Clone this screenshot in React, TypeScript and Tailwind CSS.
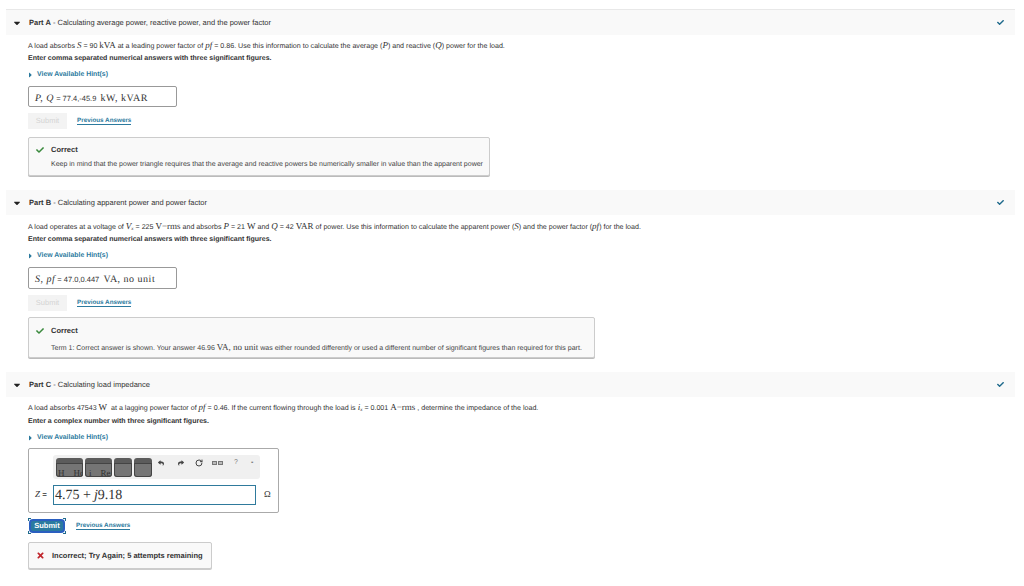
import React from 'react';
import { RotateCw } from 'lucide-react';
import { FaCaretDown, FaCaretRight, FaCheck, FaReply, FaShare, FaTimes } from 'react-icons/fa';

const M = ({ children, i = false }: { children: React.ReactNode; i?: boolean }) => (
  <span className={`font-['Liberation_Serif',serif] text-[9px] ${i ? 'italic' : ''}`}>{children}</span>
);

const A = ({ children, i = false }: { children: React.ReactNode; i?: boolean }) => (
  <span className={`font-['Liberation_Serif',serif] text-[10px] tracking-[0.5px] ${i ? 'italic' : ''}`}>{children}</span>
);

function PartHeader({ label, title }: { label: string; title: string }) {
  return (
    <div className="flex h-[25px] items-center bg-[#f9f9f9] pl-[6px] pr-[11px]">
      <FaCaretDown className="mt-[1px] h-[10px] w-[10px] text-[#222]" />
      <div className="ml-[7px] mt-[1px] text-[7.5px] text-[#333]">
        <span className="font-bold">{label}</span> - {title}
      </div>
      <FaCheck className="ml-auto h-[7px] w-[7px] text-[#1f6a8c]" />
    </div>
  );
}

function Hint() {
  return (
    <div className="mt-[6px] flex h-[10px] items-center text-[6.9px] font-bold text-[#2c7a9e]">
      <FaCaretRight className="h-[8px] w-[5px] text-[#2c7a9e]" />
      <span className="ml-[4px]">View Available Hint(s)</span>
    </div>
  );
}

function AnswerRow({ h, children }: { h: string; children: React.ReactNode }) {
  return (
    <div className={`mt-[6px] flex ${h} w-[149px] items-center rounded-[2px] border border-[#999] pl-[6px] text-[#333]`}>
      <span className="whitespace-pre">{children}</span>
    </div>
  );
}

function SubmitRow() {
  return (
    <div className="mt-[6px] flex h-[16px] items-center">
      <div className="flex h-[16px] w-[39px] items-center justify-center bg-[#f3f3f3] text-[7.5px] text-[#d4d4d4]">Submit</div>
      <a className="ml-[10px] border-b border-[#2c7a9e] text-[6.3px] font-bold leading-[7px] text-[#2c7a9e]">Previous Answers</a>
    </div>
  );
}

function CorrectBox({ box, children }: { box: string; children: React.ReactNode }) {
  return (
    <div className={`${box} rounded-[2px] border border-[#ccc] bg-[#f9f9f9] pl-[7px] shadow-[0_1px_0_#bbb]`}>
      <div className="flex h-[9px] items-center text-[7.5px] font-bold text-[#333]">
        <FaCheck className="h-[8px] w-[8px] text-[#3b8a3e]" />
        <span className="ml-[7px]">Correct</span>
      </div>
      <div className="ml-[15px] mt-[6px] whitespace-nowrap text-[7px] text-[#444]">{children}</div>
    </div>
  );
}

function Toolbar() {
  const dark = 'h-[19px] overflow-hidden rounded-[3px] border-t-[5px] border-[#5c5c5c] bg-[#757575] shadow-[inset_0_0_0_1px_#444]';
  return (
    <div className="ml-[24px] flex h-[24px] w-[207px] items-start rounded-[3px] bg-[#f0f0f0] pl-[3px] pt-[3px] text-[#444]">
      <div className={`${dark} w-[27px] whitespace-pre pl-[2px] font-['Liberation_Serif',serif] text-[9px] leading-[21px] text-[#333]`}>H    Ho</div>
      <div className={`${dark} ml-[2px] w-[27px] whitespace-pre pl-[4px] font-['Liberation_Serif',serif] text-[9px] leading-[21px] text-[#333]`}>i    Re</div>
      <div className={`${dark} ml-[2px] w-[18px]`} />
      <div className={`${dark} ml-[2px] w-[18px]`} />
      <FaReply className="ml-[6px] mt-[2px] h-[6px] w-[6px]" />
      <FaShare className="ml-[14px] mt-[2px] h-[6px] w-[6px]" />
      <RotateCw className="ml-[11px] mt-[1px] h-[8px] w-[8px]" strokeWidth={3} />
      <div className="ml-[9px] mt-[3px] flex gap-[1px]">
        <div className="h-[4px] w-[5px] border border-[#777] bg-[#bbb]" />
        <div className="h-[4px] w-[5px] border border-[#777] bg-[#bbb]" />
      </div>
      <span className="ml-[11px] text-[7px] leading-[9px] text-[#888]">?</span>
      <span className="ml-[13px] text-[7px] font-bold leading-[9px]">-</span>
    </div>
  );
}

export default function App() {
  const corner = 'absolute h-[3px] w-[3px] border-[#1f6a8c]';
  return (
    <div className="h-[586px] w-[1024px] overflow-hidden bg-white pl-[6px] pt-[9px] font-['Liberation_Sans',Arial,sans-serif] text-[#333] [text-rendering:geometricPrecision]">
      <div className="w-[1009px]">
        {/* Part A */}
        <div className="border-t border-[#e8e8e8]">
          <PartHeader label="Part A" title="Calculating average power, reactive power, and the power factor" />
          <div className="pl-[22px]">
            <div className="mt-[5px] h-[10px] whitespace-pre text-[7.1px] leading-[10px]">
              A load absorbs <M i>S</M> = 90 <M>kVA</M> at a leading power factor of <M i>pf</M> = 0.86. Use this information to calculate the average (<M i>P</M>) and reactive (<M i>Q</M>) power for the load.
            </div>
            <div className="mt-[4px] h-[10px] text-[7px] font-bold leading-[10px]">Enter comma separated numerical answers with three significant figures.</div>
            <Hint />
            <AnswerRow h="h-[21px]">
              <A i>P, Q</A><span className="text-[7.5px]"> = 77.4,-45.9  </span><A>kW, kVAR</A>
            </AnswerRow>
            <SubmitRow />
            <CorrectBox box="mt-[8px] h-[39px] w-[462px] pt-[7px]">Keep in mind that the power triangle requires that the average and reactive powers be numerically smaller in value than the apparent power</CorrectBox>
          </div>
        </div>

        {/* Part B */}
        <div className="mt-[14px]">
          <PartHeader label="Part B" title="Calculating apparent power and power factor" />
          <div className="pl-[22px]">
            <div className="mt-[6px] h-[10px] whitespace-pre text-[7.1px] leading-[10px]">
              A load operates at a voltage of <M i>V<sub className="text-[5px]">x</sub></M> = 225 <M>V−rms</M> and absorbs <M i>P</M> = 21 <M>W</M> and <M i>Q</M> = 42 <M>VAR</M> of power. Use this information to calculate the apparent power (<M i>S</M>) and the power factor (<M i>pf</M>) for the load.
            </div>
            <div className="mt-[4px] h-[10px] text-[7px] font-bold leading-[10px]">Enter comma separated numerical answers with three significant figures.</div>
            <Hint />
            <AnswerRow h="h-[22px]">
              <A i>S, pf</A><span className="text-[7.5px]"> = 47.0,0.447  </span><A>VA, no unit</A>
            </AnswerRow>
            <SubmitRow />
            <CorrectBox box="mt-[6px] h-[41px] w-[567px] pt-[8px]">Term 1: Correct answer is shown. Your answer 46.96 <M>VA, no unit</M> was either rounded differently or used a different number of significant figures than required for this part.</CorrectBox>
          </div>
        </div>

        {/* Part C */}
        <div className="mt-[14px]">
          <PartHeader label="Part C" title="Calculating load impedance" />
          <div className="pl-[22px]">
            <div className="mt-[5px] h-[10px] whitespace-pre text-[7.1px] leading-[10px]">
              A load absorbs 47543 <M>W</M>  at a lagging power factor of <M i>pf</M> = 0.46. If the current flowing through the load is <M i>i<sub className="text-[5px]">x</sub></M> = 0.001 <M>A−rms</M> , determine the impedance of the load.
            </div>
            <div className="mt-[5px] h-[10px] text-[7px] font-bold leading-[10px]">Enter a complex number with three significant figures.</div>
            <Hint />
            <div className="mt-[5px] h-[65px] w-[251px] rounded-[2px] border border-[#aaa] pt-[6px]">
              <Toolbar />
              <div className="mt-[6px] flex items-center">
                <span className="ml-[6px] w-[18px] whitespace-pre text-[8px]"><M i>Z</M> =</span>
                <div className="flex h-[20px] w-[203px] items-center border border-[#2f7a9c] pl-[1px] font-['Liberation_Serif',serif] text-[14px] text-[#333]">
                  4.75 + <span className="ml-[3px] italic">j</span>9.18
                </div>
                <span className="ml-[8px] font-['Liberation_Serif',serif] text-[9px]">Ω</span>
              </div>
            </div>
            <div className="mt-[6px] flex h-[14px] items-center">
              <div className="relative ml-[1px] flex h-[14px] w-[36px] items-center justify-center rounded-[4px] border-2 border-[#2a5fc0] bg-[#2a7a9f] text-[7.5px] font-bold text-white">
                Submit
                <span className={`${corner} -left-[3px] -top-[3px] border-l border-t`} />
                <span className={`${corner} -right-[3px] -top-[3px] border-r border-t`} />
                <span className={`${corner} -bottom-[3px] -left-[3px] border-b border-l`} />
                <span className={`${corner} -bottom-[3px] -right-[3px] border-b border-r`} />
              </div>
              <a className="ml-[11px] border-b border-[#2c7a9e] text-[6.3px] font-bold leading-[7px] text-[#2c7a9e]">Previous Answers</a>
            </div>
            <div className="mt-[9px] flex h-[27px] w-[184px] items-center rounded-[2px] border border-[#ccc] bg-[#f9f9f9] pl-[7px] text-[7.5px] font-bold shadow-[0_1px_0_#ccc]">
              <FaTimes className="h-[9px] w-[9px] text-[#c0262d]" />
              <span className="ml-[7px]">Incorrect; Try Again; 5 attempts remaining</span>
            </div>
          </div>
        </div>
      </div>
    </div>
  );
}
